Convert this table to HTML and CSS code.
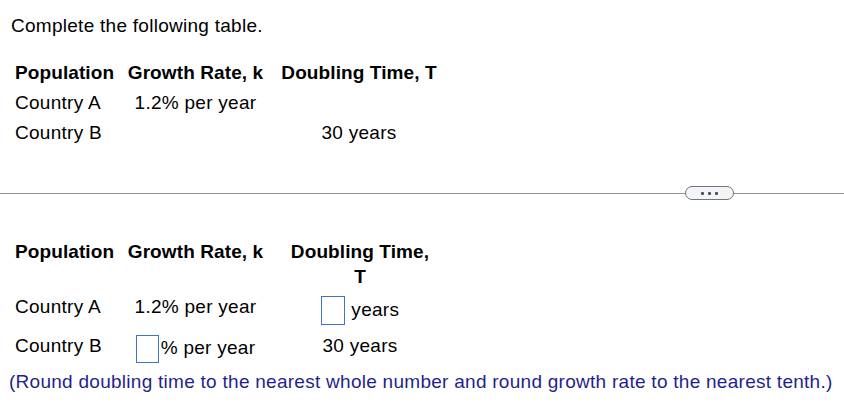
FILE: index.html
```html
<!DOCTYPE html>
<html>
<head>
<meta charset="utf-8">
<link rel="stylesheet" href="styles.css">
</head>
<body>
<p class="title">Complete the following table.</p>

<div class="t1">
  <div class="row1">
    <div class="c1 b">Population</div>
    <div class="c2 b">Growth Rate, k</div>
    <div class="c3 b">Doubling Time, T</div>
  </div>
  <div class="row1">
    <div class="c1">Country A</div>
    <div class="c2">1.2% per year</div>
    <div class="c3"></div>
  </div>
  <div class="row1">
    <div class="c1">Country B</div>
    <div class="c2"></div>
    <div class="c3">30 years</div>
  </div>
</div>

<div class="divider">
  <span class="pill"><i></i><i></i><i></i></span>
</div>

<div class="t2">
  <div class="row2 head">
    <div class="c1 b">Population</div>
    <div class="c2 b">Growth Rate, k</div>
    <div class="c3 b">Doubling Time, T</div>
  </div>
  <div class="row2 ra">
    <div class="c1">Country A</div>
    <div class="c2">1.2% per year</div>
    <div class="c3 boxcell"><span class="box box-a"></span> years</div>
  </div>
  <div class="row2 rb">
    <div class="c1">Country B</div>
    <div class="c2 boxcell"><span class="box box-b"></span>% per year</div>
    <div class="c3">30 years</div>
  </div>
</div>

<p class="note">(Round doubling time to the nearest whole number and round growth rate to the nearest tenth.)</p>
</body>
</html>
```

FILE: styles.css
```css
html, body {
  margin: 0;
  padding: 0;
  background: #ffffff;
}

body {
  font-family: "Liberation Sans", Arial, sans-serif;
  font-size: 19px;
  color: #000000;
  line-height: 25px;
  letter-spacing: 0.27px;
}

.title {
  margin: 13px 0 0 11px;
}

.b {
  font-weight: bold;
  letter-spacing: 0.1px;
}

/* first table */
.t1 {
  margin: 20px 0 0 15px;
}

.row1 {
  display: grid;
  grid-template-columns: 112px 137px 173px;
  line-height: 30px;
  height: 30px;
}

.row1 .c2 {
  text-align: center;
  white-space: nowrap;
}

.row1 .c3 {
  padding-left: 17px;
  text-align: center;
  white-space: nowrap;
}

/* divider */
.divider {
  position: relative;
  margin-top: 45px;
  height: 1px;
  background: #8c9097;
}

.pill {
  position: absolute;
  left: 685px;
  top: -7px;
  width: 49px;
  height: 14px;
  box-sizing: border-box;
  border: 1px solid #6f7580;
  border-radius: 7px;
  background: #f3f4f6;
  display: flex;
  align-items: center;
  justify-content: center;
  gap: 4px;
}

.pill i {
  display: block;
  width: 3px;
  height: 3px;
  border-radius: 1px;
  background: #4a4f58;
}

/* second table */
.t2 {
  margin: 45px 0 0 15px;
}

.row2 {
  display: grid;
  grid-template-columns: 112px 137px 166px;
  align-items: start;
}

.row2 .c2 {
  text-align: center;
  white-space: nowrap;
}

.row2 .c3 {
  padding-left: 26px;
  text-align: center;
}

.ra {
  margin-top: 5px;
}

.rb {
  margin-top: 8px;
}

.boxcell {
  padding-top: 2px;
  white-space: nowrap;
}

.box {
  display: inline-block;
  box-sizing: border-box;
  border: 1px solid #3f72d2;
  background: #ffffff;
  vertical-align: middle;
}

.box-a {
  width: 24px;
  height: 29px;
  margin-right: 1px;
}

.box-b {
  width: 23px;
  height: 28px;
  margin-right: 2px;
}

.note {
  margin: 6px 0 0 9px;
  color: #1f1f8e;
  white-space: nowrap;
}
```
